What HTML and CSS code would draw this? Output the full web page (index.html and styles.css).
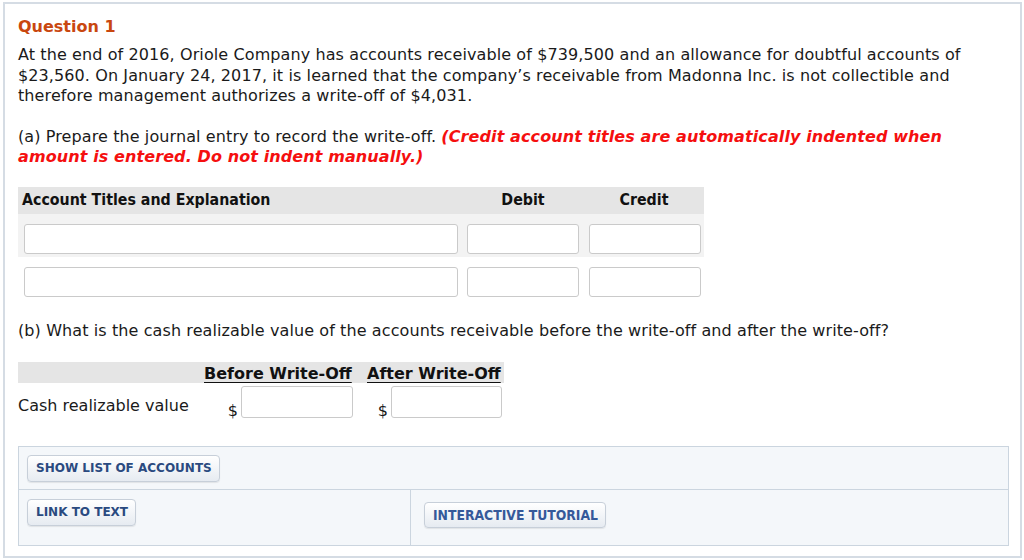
FILE: index.html
```html
<!DOCTYPE html>
<html>
<head>
<meta charset="utf-8">
<link rel="stylesheet" href="styles.css">
</head>
<body>
<div class="frame">
  <h1 class="qtitle">Question 1</h1>
  <p class="text">At the end of 2016, Oriole Company has accounts receivable of $739,500 and an allowance for doubtful accounts of $23,560. On January 24, 2017, it is learned that the company’s receivable from Madonna Inc. is not collectible and therefore management authorizes a write-off of $4,031.</p>
  <p class="text part">(a) Prepare the journal entry to record the write-off. <em class="warn">(Credit account titles are automatically indented when amount is entered. Do not indent manually.)</em></p>

  <div class="journal">
    <div class="jrow jhead">
      <div class="jc c1">Account Titles and Explanation</div>
      <div class="jc c2">Debit</div>
      <div class="jc c3">Credit</div>
    </div>
    <div class="jrow jbody shaded">
      <div class="jc c1"><span class="inp wide"></span></div>
      <div class="jc c2"><span class="inp amt"></span></div>
      <div class="jc c3"><span class="inp amt"></span></div>
    </div>
    <div class="jrow jbody">
      <div class="jc c1"><span class="inp wide"></span></div>
      <div class="jc c2"><span class="inp amt"></span></div>
      <div class="jc c3"><span class="inp amt"></span></div>
    </div>
  </div>

  <p class="text partb">(b) What is the cash realizable value of the accounts receivable before the write-off and after the write-off?</p>

  <div class="crv">
    <div class="crow chead">
      <div class="cc l"></div>
      <div class="cc b"><span class="ul">Before Write-Off</span></div>
      <div class="cc a"><span class="ul">After Write-Off</span></div>
    </div>
    <div class="crow cbody">
      <div class="cc l">Cash realizable value</div>
      <div class="cc b"><span class="dollar">$</span><span class="inp val"></span></div>
      <div class="cc a"><span class="dollar">$</span><span class="inp val"></span></div>
    </div>
  </div>

  <div class="tools">
    <div class="trow top">
      <span class="btn">SHOW LIST OF ACCOUNTS</span>
    </div>
    <div class="trow bottom">
      <div class="tcell left"><span class="btn">LINK TO TEXT</span></div>
      <div class="tcell right"><span class="btn alt">INTERACTIVE TUTORIAL</span></div>
    </div>
  </div>
</div>
</body>
</html>
```

FILE: styles.css
```css
html, body {
  margin: 0;
  padding: 0;
  background: #ffffff;
}
body {
  font-family: "DejaVu Sans", Verdana, sans-serif;
  color: #1a1a1a;
}
.frame {
  margin: 2px 2px 0 3px;
  height: 556px;
  box-sizing: border-box;
  border: 2px solid #d5dce4;
  padding: 13px 13px 0 13px;
}
.qtitle {
  margin: 0;
  font-size: 16px;
  line-height: 20px;
  font-weight: bold;
  color: #c9470f;
}
.text {
  margin: 8px 0 0 0;
  font-size: 16px;
  line-height: 20.5px;
  letter-spacing: 0.1px;
}
.part {
  margin-top: 20px;
}
.warn {
  color: #f50f0f;
  font-weight: bold;
  font-style: italic;
}
.journal {
  margin-top: 19px;
  width: 686px;
}
.jrow {
  display: grid;
  grid-template-columns: 444px 122px 120px;
}
.jhead {
  background: #e5e5e5;
  height: 27px;
  align-items: center;
  font-family: "DejaVu Sans Condensed", "DejaVu Sans", sans-serif;
  font-weight: bold;
  font-size: 15.8px;
  line-height: 18px;
  padding-bottom: 1px;
  box-sizing: border-box;
  color: #111;
}
.jhead .c1 { padding-left: 4px; }
.jhead .c2, .jhead .c3 { text-align: center; }
.jbody {
  padding: 10px 0 3px 0;
}
.jbody .c1 { padding-left: 6px; }
.jbody .c2, .jbody .c3 { padding-left: 5px; }
.shaded { background: #f3f3f3; }
.inp {
  display: block;
  box-sizing: border-box;
  height: 30px;
  background: #fff;
  border: 1px solid #cacaca;
  border-radius: 3px;
}
.inp.wide { width: 434px; }
.inp.amt { width: 112px; }
.partb { margin-top: 21px; }
.crv {
  margin-top: 21px;
  width: 486px;
}
.crow {
  display: grid;
  grid-template-columns: 172px 149px 135px;
  column-gap: 14px;
}
.chead {
  background: #e5e5e5;
  height: 21px;
  align-items: end;
  padding-right: 2px;
  font-weight: bold;
  font-size: 16px;
  line-height: 19px;
  color: #111;
}
.chead .cc.b, .chead .cc.a {
  justify-content: flex-start;
}
.ul {
  text-decoration: underline;
  text-underline-offset: 3px;
  text-decoration-thickness: 1px;
  white-space: nowrap;
}
.cbody {
  padding-top: 3px;
  align-items: center;
  font-size: 16px;
}
.cbody .l { padding-top: 6px; }
.cc.b, .cc.a {
  display: flex;
  justify-content: flex-end;
  align-items: flex-end;
}
.dollar {
  font-size: 16px;
  line-height: 16px;
  margin-right: 3px;
  margin-bottom: -1px;
}
.inp.val {
  width: 112px;
  height: 32px;
}
.cc.a .inp.val { width: 111px; }
.tools {
  margin-top: 28px;
  width: 991px;
  box-sizing: border-box;
  border: 1px solid #cbd5df;
  background: #f4f7fa;
}
.trow.top {
  height: 43px;
  box-sizing: border-box;
  padding: 8px 0 0 8px;
  border-bottom: 1px solid #cbd5df;
}
.trow.bottom {
  display: flex;
  height: 55px;
}
.tcell.left {
  width: 392px;
  box-sizing: border-box;
  padding: 9px 0 0 8px;
  border-right: 1px solid #cbd5df;
}
.tcell.right {
  padding: 12px 0 0 13px;
}
.btn {
  display: inline-block;
  box-sizing: border-box;
  height: 27px;
  line-height: 25px;
  padding: 0 7px 0 8px;
  border: 1px solid #c7cfd9;
  border-radius: 4px;
  background: linear-gradient(#ffffff, #e6ebf1);
  color: #2a4a80;
  font-weight: bold;
  font-size: 12px;
  box-shadow: 0 1px 1px rgba(0,0,0,0.08);
}
.btn.alt {
  height: 26px;
  line-height: 24px;
  font-family: "DejaVu Sans Condensed", "DejaVu Sans", sans-serif;
  font-size: 13.8px;
  color: #35599a;
  padding: 0 7px 0 8px;
}
```
